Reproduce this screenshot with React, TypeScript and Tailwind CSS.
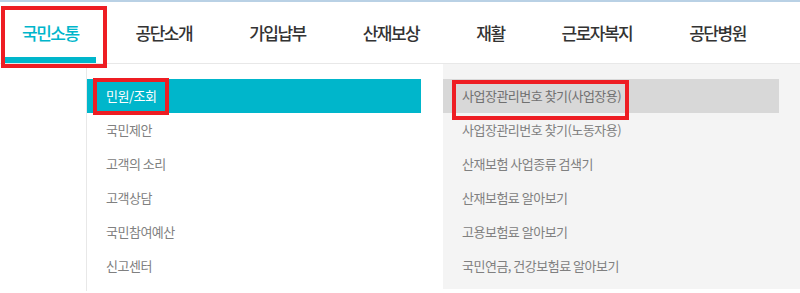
import React from "react";

const navItems = ["국민소통", "공단소개", "가입납부", "산재보상", "재활", "근로자복지", "공단병원"];
const leftItems = ["민원/조회", "국민제안", "고객의 소리", "고객상담", "국민참여예산", "신고센터"];
const rightItems = [
  "사업장관리번호 찾기(사업장용)",
  "사업장관리번호 찾기(노동자용)",
  "산재보험 사업종류 검색기",
  "산재보험료 알아보기",
  "고용보험료 알아보기",
  "국민연금, 건강보험료 알아보기",
];

export default function App() {
  return (
    <div className="relative w-[800px] h-[293px] overflow-hidden bg-white font-['Noto_Sans_CJK_KR','Noto_Sans',sans-serif]">
      <div className="h-[2px] bg-[#b9d1e5]" />
      <nav className="flex h-[62px] gap-[23px] border-b border-[#e8e8e8] pl-[5px]">
        {navItems.map((t, i) => (
          <div
            key={t}
            className={
              i === 0
                ? "relative flex items-center px-[17px] text-[17px] font-medium tracking-[-1.5px] text-[#00b6cb]"
                : "relative flex items-center px-[17px] text-[17px] font-medium tracking-[-1.5px] text-[#333333]"
            }
          >
            {t}
            {i === 0 && <div className="absolute bottom-0 left-0 right-0 h-[6px] bg-[#00b6cb]" />}
          </div>
        ))}
      </nav>
      <div className="flex h-[227px]">
        <div className="flex w-[443px] pl-[86px]">
          <div className="flex-1 border-l border-[#e8e8e8] pr-[22px] pt-[15px]">
            {leftItems.map((t, i) => (
              <div
                key={t}
                className={
                  i === 0
                    ? "flex h-[34px] items-center bg-[#00b6cb] pl-[19px] text-[13px] tracking-[-0.5px] text-white"
                    : "flex h-[34px] items-center pl-[19px] text-[13px] tracking-[-0.5px] text-[#808080]"
                }
              >
                {t}
              </div>
            ))}
          </div>
        </div>
        <div className="mb-[2px] flex-1 bg-[#f4f4f4] pr-[21px] pt-[15px]">
          {rightItems.map((t, i) => (
            <div
              key={t}
              className={
                i === 0
                  ? "flex h-[34px] items-center bg-[#d8d8d8] pl-[19px] text-[13px] tracking-[-0.5px] text-[#707070]"
                  : "flex h-[34px] items-center pl-[19px] text-[13px] tracking-[-0.5px] text-[#808080]"
              }
            >
              {t}
            </div>
          ))}
        </div>
      </div>
      <div className="absolute left-[1px] top-[6px] h-[62px] w-[106px] border-4 border-[#ee1d23]" />
      <div className="absolute left-[93px] top-[78px] h-[37px] w-[76px] border-4 border-[#ee1d23]" />
      <div className="absolute left-[452px] top-[80px] h-[40px] w-[177px] border-4 border-[#ee1d23]" />
    </div>
  );
}
